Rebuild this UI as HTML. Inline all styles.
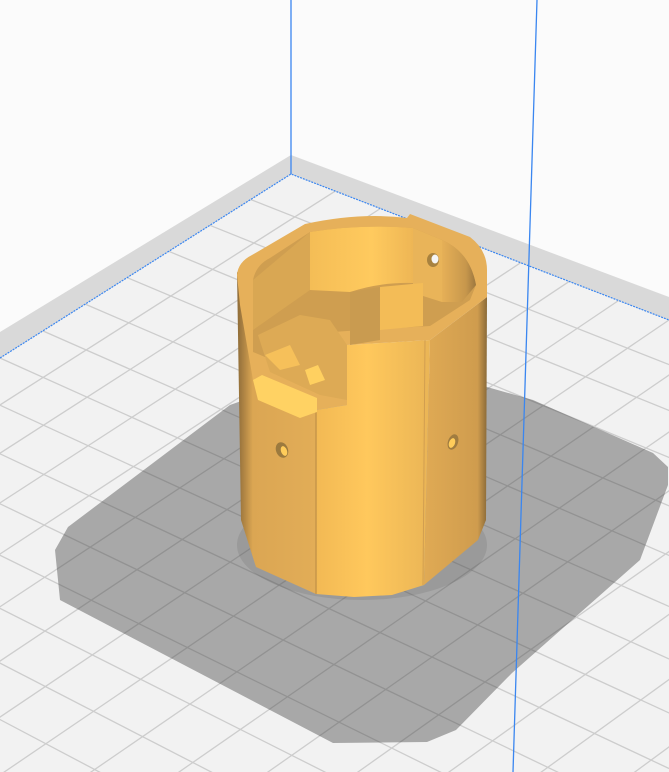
<!DOCTYPE html>
<html><head><meta charset="utf-8"><style>
html,body{margin:0;padding:0;background:#fbfbfb;width:669px;height:772px;overflow:hidden;position:relative;}
svg{display:block;position:absolute;left:0;top:0;overflow:hidden}
</style></head><body>
<svg id="s" width="669" height="772" viewBox="0 0 669 772" overflow="hidden" xmlns="http://www.w3.org/2000/svg">
<defs>
<clipPath id="cp"><rect width="669" height="772"/></clipPath>
<linearGradient id="fr" x1="0" x2="1" y1="0" y2="0">
<stop offset="0" stop-color="#f2b954"/><stop offset="0.45" stop-color="#ffc85c"/><stop offset="1" stop-color="#eab556"/>
</linearGradient>
<linearGradient id="lf" x1="0" x2="1" y1="0" y2="0">
<stop offset="0" stop-color="#8c6a38"/><stop offset="0.2" stop-color="#dba653"/><stop offset="1" stop-color="#e2ad57"/>
</linearGradient>
<linearGradient id="rf" x1="0" x2="1" y1="0" y2="0">
<stop offset="0" stop-color="#e0aa54"/><stop offset="0.85" stop-color="#cf9c4e"/><stop offset="1" stop-color="#8a6a38"/>
</linearGradient>
<linearGradient id="bw" x1="0" x2="1" y1="0" y2="0">
<stop offset="0" stop-color="#f4bd56"/><stop offset="0.6" stop-color="#ffca5e"/><stop offset="1" stop-color="#eeb655"/>
</linearGradient>
<linearGradient id="cv" x1="0" x2="1" y1="0" y2="0">
<stop offset="0" stop-color="#e6b057"/><stop offset="0.7" stop-color="#c7974c"/><stop offset="1" stop-color="#9c773f"/>
</linearGradient>
</defs>
<g clip-path="url(#cp)">
<rect width="669" height="772" fill="#fbfbfb"/>
<polygon points="291,174 669,320 669,772 0,772 0,358" fill="#f2f2f2"/>
<g id="grid" stroke="#cdcdcd" stroke-width="1.3" fill="none"></g>
<polygon points="291,155 669,297 669,320 291,174 0,358 0,332" fill="#d9d9d9"/>
<polyline points="0,358 291,174 669,320" fill="none" stroke="#3a86f0" stroke-width="1.2" stroke-dasharray="2,1"/>
<line x1="291" y1="0" x2="291" y2="174" stroke="#3a86f0" stroke-width="1.3"/>
<polygon points="230,405 68,527 55,550 60,600 333,743 427,742 456,730 512,673 640,560 668,485 668,467 653,453 533,400 480,385 300,380" fill="rgba(70,70,70,0.43)"/>
<ellipse cx="362" cy="545" rx="125" ry="55" fill="rgba(60,60,60,0.12)"/>
<polygon points="237,272 256,300 316,410 316,594 256,567 241,520" fill="url(#lf)"/>
<polygon points="316,410 347,405 347,345 430,340 424,585 392,595 354,597 316,594" fill="url(#fr)"/>
<polygon points="430,340 487,297 486,520 478,540 424,585" fill="url(#rf)"/>
<line x1="316" y1="410" x2="316" y2="594" stroke="#c8964a" stroke-width="1.5"/>
<line x1="425" y1="340" x2="423" y2="585" stroke="#d19e50" stroke-width="1"/>
<path d="M237,275 Q238,262 252,255 L305,224 Q360,212 407,218 L410,214 L470,237 Q487,250 487,270 L487,297 L430,340 L347,345 L347,405 L316,410 L253,380 L240,305 Z" fill="#e6b05a"/>
<path d="M253,280 Q256,265 270,258 L310,232 Q360,224 413,228 L442,240 Q470,252 476,285 L470,300 L430,326 L347,331 L320,333 L265,357 L253,352 Z" fill="#cf9e50"/>
<path d="M310,232 Q360,224 413,228 L413,283 Q380,282 350,292 L310,290 Z" fill="url(#bw)"/>
<polygon points="253,280 310,232 310,290 253,330" fill="#d9a753"/>
<polygon points="413,228 442,240 442,302 423,296 413,290" fill="#e9b459"/>
<path d="M442,240 Q470,252 476,285 L462,302 L442,302 Z" fill="url(#cv)"/>
<polygon points="350,292 380,287 380,340 350,345" fill="#c99b50"/>
<polygon points="380,287 423,283 423,326 380,330" fill="#f3bc57"/>
<polygon points="258,335 300,315 330,320 347,345 347,400 320,395 270,372" fill="#ddaa55"/>
<polygon points="265,355 290,345 300,365 280,370" fill="#f6c05a"/>
<polygon points="305,370 318,365 325,380 310,385" fill="#ffd060"/>
<polygon points="253,380 262,375 317,398 317,412 300,418 258,400" fill="#ffd263"/>
<ellipse cx="433" cy="260" rx="6" ry="7" fill="#a8823f"/>
<ellipse cx="435" cy="259" rx="3.5" ry="4.5" fill="#f5f5f5"/>
<ellipse cx="282" cy="450" rx="6" ry="8" fill="#9c7a3e" transform="rotate(-20 282 450)"/>
<ellipse cx="284" cy="451" rx="3" ry="5" fill="#ffcc5a" transform="rotate(-20 284 451)"/>
<ellipse cx="453" cy="442" rx="5" ry="8" fill="#a07c40" transform="rotate(20 453 442)"/>
<ellipse cx="452" cy="443" rx="3" ry="5" fill="#ffcc5a" transform="rotate(20 452 443)"/>
<line x1="537" y1="0" x2="513" y2="772" stroke="#3a86f0" stroke-width="1.3"/>
</g>
<script>
(function(){
var x0=291,y0=174,x1=669,y1=320,x2=369,y2=524,x3=0,y3=358;
var dx1=x1-x2,dx2=x3-x2,dx3=x0-x1+x2-x3,dy1=y1-y2,dy2=y3-y2,dy3=y0-y1+y2-y3;
var den=dx1*dy2-dx2*dy1;
var g=(dx3*dy2-dx2*dy3)/den,h=(dx1*dy3-dx3*dy1)/den;
var a=x1-x0+g*x1,b=x3-x0+h*x3,c=x0,d=y1-y0+g*y1,e=y3-y0+h*y3,f=y0;
function P(u,v){var s=u/8,t=v/7;var w=g*s+h*t+1;return [(a*s+b*t+c)/w,(d*s+e*t+f)/w];}
var G=document.getElementById('grid'),ns='http://www.w3.org/2000/svg';
function L(p,q){var l=document.createElementNS(ns,'line');l.setAttribute('x1',p[0].toFixed(1));l.setAttribute('y1',p[1].toFixed(1));l.setAttribute('x2',q[0].toFixed(1));l.setAttribute('y2',q[1].toFixed(1));G.appendChild(l);}
for(var k=1;k<=40;k++){L(P(k,0),P(k,30));L(P(0,k),P(30,k));}
})();
</script>
</svg>
</body></html>
